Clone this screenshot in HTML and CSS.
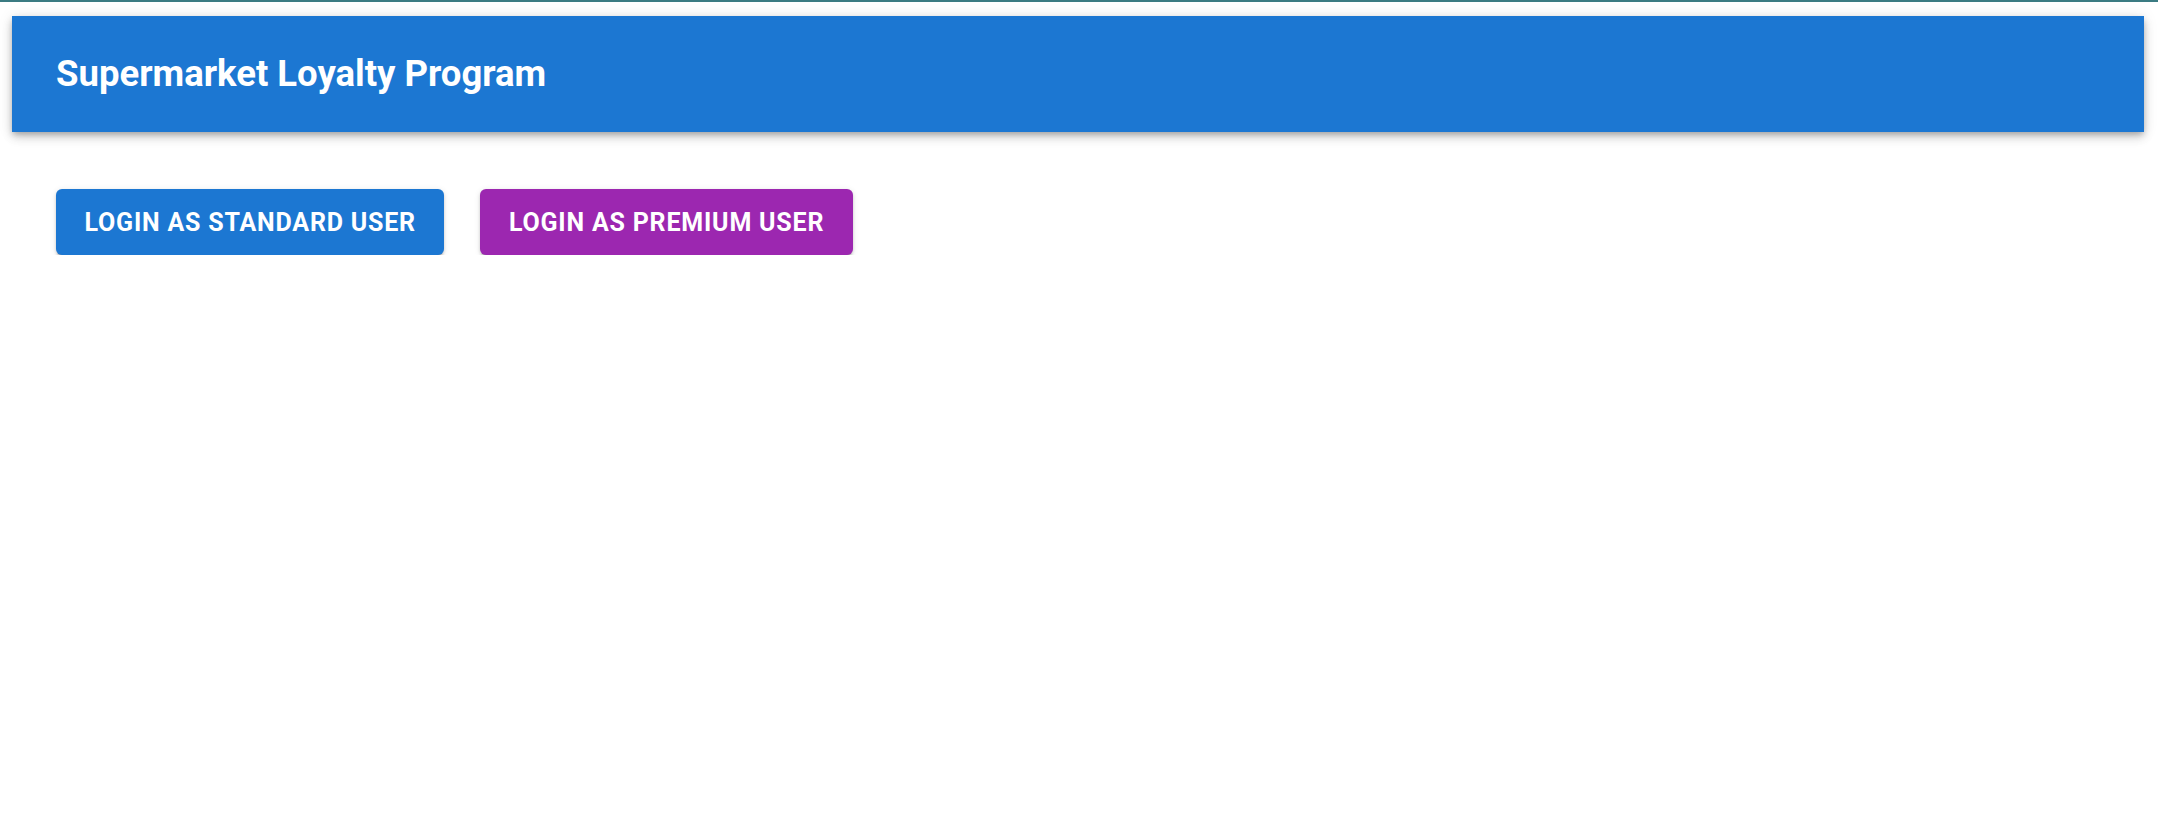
FILE: index.html
```html
<!DOCTYPE html>
<html>
<head>
<meta charset="utf-8">
<title>Supermarket Loyalty Program</title>
<link rel="stylesheet" href="styles.css">
</head>
<body>
<div class="topline"></div>
<div class="page">
  <header class="appbar">
    <h1 class="title">Supermarket Loyalty Program</h1>
  </header>
  <div class="actions">
    <button class="btn btn-standard">Login as Standard User</button>
    <button class="btn btn-premium">Login as Premium User</button>
  </div>
</div>
</body>
</html>
```
FILE: styles.css
```css
html, body {
  margin: 0;
  padding: 0;
  background: #ffffff;
  font-family: Roboto, "Liberation Sans", Arial, sans-serif;
}

.topline {
  height: 2px;
  background: #3b7b82;
}

.page {
  padding: 14px 14px 0 12px;
}

.appbar {
  height: 116px;
  background: #1c77d2;
  display: flex;
  align-items: center;
  padding: 0 44px;
  box-shadow: 0 3px 6px -1px rgba(0,0,0,0.25), 0 6px 10px 0 rgba(0,0,0,0.12), 0 1px 14px 0 rgba(0,0,0,0.1);
}

.title {
  margin: 0;
  color: #ffffff;
  font-size: 36.5px;
  font-weight: 700;
  line-height: 1;
}

.actions {
  display: flex;
  gap: 36px;
  margin-top: 57px;
  padding-left: 44px;
}

.btn {
  height: 66px;
  padding: 0 28.5px;
  border: none;
  border-radius: 6px;
  color: #ffffff;
  font-family: Roboto, "Liberation Sans", Arial, sans-serif;
  font-size: 25px;
  font-weight: 700;
  text-transform: uppercase;
  letter-spacing: 0.8px;
  box-shadow: 0 3px 2px -2px rgba(0,0,0,0.25), 0 2px 3px 0 rgba(0,0,0,0.15), 0 1px 6px 0 rgba(0,0,0,0.1);
  cursor: pointer;
}

.btn-standard {
  background: #1c77d2;
}

.btn-premium {
  background: #9c27b0;
}
```
